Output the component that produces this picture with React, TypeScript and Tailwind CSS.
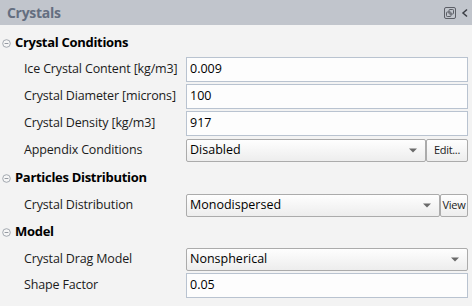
import React from "react";

const font = { fontFamily: '"Open Sans", "Liberation Sans", sans-serif' };

function CircleMinus() {
  return (
    <svg width="9" height="9" viewBox="0 0 9 9" className="shrink-0">
      <circle cx="4.5" cy="4.5" r="3.8" fill="#f6f6f6" stroke="#9aa0a8" strokeWidth="0.9" />
      <line x1="2.6" y1="4.5" x2="6.4" y2="4.5" stroke="#8a9098" strokeWidth="0.9" />
    </svg>
  );
}

function Header({ title, h }: { title: string; h: string }) {
  return (
    <div className={`flex items-center gap-[4px] pl-[2px] ${h}`}>
      <CircleMinus />
      <span className="text-[13px] font-bold text-black tracking-[-0.3px]">{title}</span>
    </div>
  );
}

function Label({ children }: { children: React.ReactNode }) {
  return (
    <div className="w-[186px] shrink-0 pl-[24px] text-[12.5px] text-[#1b1b1b] tracking-[-0.15px] whitespace-nowrap">
      {children}
    </div>
  );
}

function InputRow({ label, value }: { label: string; value: string }) {
  return (
    <div className="flex items-center h-[27px]">
      <Label>{label}</Label>
      <div className="flex-1 h-[25px] mr-[4px] border border-[#b9c3d0] bg-[#fdfdfd] flex items-center pl-[3px] text-[12.5px] text-black">
        {value}
      </div>
    </div>
  );
}

function Arrow() {
  return (
    <svg width="8" height="5" viewBox="0 0 8 5" className="shrink-0">
      <polygon points="0,0.5 8,0.5 4,4.5" fill="#6a6a6a" />
    </svg>
  );
}

function Dropdown({ value, className }: { value: string; className: string }) {
  return (
    <div
      className={`h-[23px] border border-[#ababab] rounded-[2px] bg-gradient-to-b from-[#fefefe] to-[#ededed] flex items-center justify-between pl-[3px] pr-[8px] text-[12.5px] text-black ${className}`}
    >
      <span>{value}</span>
      <Arrow />
    </div>
  );
}

function Btn({ label, w }: { label: string; w: string }) {
  return (
    <div
      className={`h-[23px] ${w} shrink-0 border border-[#ababab] rounded-[2px] bg-gradient-to-b from-[#fefefe] to-[#ededed] flex items-center justify-center text-[11px] text-[#1b1b1b] tracking-[-0.3px]`}
    >
      {label}
    </div>
  );
}

export default function App() {
  return (
    <div className="w-[472px] h-[306px] bg-[#f3f3f3] overflow-hidden" style={font}>
      <div className="h-[25px] bg-[#c1c5cc] flex items-center justify-between pl-[7px] pr-[3px]">
        <span className="text-[14px] font-bold text-[#646e80] tracking-[-0.3px]">Crystals</span>
        <div className="flex items-center gap-[5px]">
          <svg width="12" height="12" viewBox="0 0 12 12">
            <rect x="0.5" y="0.5" width="11" height="11" rx="1.5" fill="none" stroke="#5c5f66" strokeWidth="1" />
            <rect x="5" y="2.5" width="4.5" height="4.5" rx="0.8" fill="none" stroke="#5c5f66" strokeWidth="1" />
            <rect x="2.5" y="5" width="4.5" height="4.5" rx="0.8" fill="none" stroke="#5c5f66" strokeWidth="1" />
          </svg>
          <svg width="8" height="10" viewBox="0 0 8 10">
            <polyline points="6,1.5 2,5 6,8.5" fill="none" stroke="#3a3d44" strokeWidth="1.5" />
          </svg>
        </div>
      </div>
      <div className="pt-[5px]">
        <Header title="Crystal Conditions" h="h-[26px]" />
        <InputRow label="Ice Crystal Content [kg/m3]" value="0.009" />
        <InputRow label="Crystal Diameter [microns]" value="100" />
        <InputRow label="Crystal Density [kg/m3]" value="917" />
        <div className="flex items-center h-[27px]">
          <Label>Appendix Conditions</Label>
          <div className="flex-1 flex mr-[4px]">
            <Dropdown value="Disabled" className="flex-1" />
            <Btn label="Edit..." w="w-[42px]" />
          </div>
        </div>
        <Header title="Particles Distribution" h="h-[28px]" />
        <div className="flex items-center h-[26px]">
          <Label>Crystal Distribution</Label>
          <div className="flex-1 flex mr-[4px]">
            <Dropdown value="Monodispersed" className="flex-1" />
            <Btn label="View" w="w-[28px]" />
          </div>
        </div>
        <Header title="Model" h="h-[28px]" />
        <div className="flex items-center h-[26px]">
          <Label>Crystal Drag Model</Label>
          <Dropdown value="Nonspherical" className="flex-1 mr-[4px]" />
        </div>
        <InputRow label="Shape Factor" value="0.05" />
      </div>
    </div>
  );
}
